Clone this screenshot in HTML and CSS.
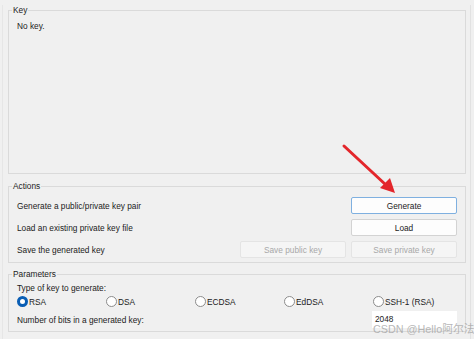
FILE: index.html
```html
<!DOCTYPE html>
<html lang="en">
<head>
    <meta charset="UTF-8">
    <meta name="viewport" content="width=device-width, initial-scale=1.0">
    <title>PuTTY Key Generator</title>
    <link rel="stylesheet" href="styles.css">
</head>
<body>
    <div class="window">
        <fieldset class="group key-group">
            <legend>Key</legend>
            <div class="key-text">No key.</div>
        </fieldset>

        <fieldset class="group actions">
            <legend>Actions</legend>
            <div class="action-grid">
                <span class="row-label">Generate a public/private key pair</span>
                <span></span>
                <button class="btn btn-default">Generate</button>

                <span class="row-label">Load an existing private key file</span>
                <span></span>
                <button class="btn">Load</button>

                <span class="row-label">Save the generated key</span>
                <button class="btn" disabled>Save public key</button>
                <button class="btn" disabled>Save private key</button>
            </div>
        </fieldset>

        <fieldset class="group params">
            <legend>Parameters</legend>
            <div class="param-title">Type of key to generate:</div>
            <div class="radio-row">
                <label class="radio"><span class="dot checked"></span>RSA</label>
                <label class="radio"><span class="dot"></span>DSA</label>
                <label class="radio"><span class="dot"></span>ECDSA</label>
                <label class="radio"><span class="dot"></span>EdDSA</label>
                <label class="radio"><span class="dot"></span>SSH-1 (RSA)</label>
            </div>
            <div class="bits-row">
                <span>Number of bits in a generated key:</span>
                <div class="bits-input">2048</div>
            </div>
        </fieldset>
    </div>

    <svg class="arrow" width="474" height="339" viewBox="0 0 474 339">
        <line x1="344" y1="146" x2="386" y2="185" stroke="#e3262b" stroke-width="3" stroke-linecap="round"/>
        <polygon points="395,193 380,188 390,178" fill="#e3262b"/>
    </svg>

    <div class="watermark">CSDN @Hello阿尔法</div>
</body>
</html>
```

FILE: styles.css
```css
body {
    margin: 0;
    width: 474px;
    height: 339px;
    overflow: hidden;
    background: #f0f0f0;
    font-family: "Liberation Sans", Arial, sans-serif;
    font-size: 8.3px;
    line-height: 10px;
    color: #1b1b1b;
}
.window {
    height: 339px;
    margin: 0 3px 0 2px;
    border-left: 1px solid #e6e6e6;
    border-right: 1px solid #e2e2e2;
    box-sizing: border-box;
}
.group {
    margin: 0 4px 0 5px;
    padding: 0 8px;
    border: 1px solid #dadada;
    min-width: 0;
}
.group legend {
    margin-left: -5px;
    padding: 0 1px;
    line-height: 10px;
}
.key-group {
    margin-top: 5px;
    padding-top: 6px;
    padding-bottom: 4px;
}
.key-text {
    height: 148px;
}
.actions {
    margin-top: 7px;
    padding-top: 6px;
    padding-bottom: 4px;
}
.action-grid {
    display: grid;
    grid-template-columns: 1fr 106px 106px;
    grid-auto-rows: 17px;
    column-gap: 5px;
    row-gap: 5px;
    align-items: center;
}
.btn {
    height: 17px;
    padding: 0;
    font-family: inherit;
    font-size: 8.3px;
    color: #1b1b1b;
    background: #fdfdfd;
    border: 1px solid #d3d3d3;
    border-radius: 2px;
}
.btn-default {
    border-color: #7fb0e0;
}
.btn:disabled {
    background: #f5f5f5;
    border-color: #e4e4e4;
    color: #a8a8a8;
}
.params {
    margin-top: 6px;
    padding-top: 4px;
    padding-bottom: 3px;
}
.radio-row {
    display: grid;
    grid-template-columns: repeat(5, 89px);
    margin-top: 3px;
    height: 10px;
}
.radio {
    display: flex;
    align-items: center;
    gap: 1px;
}
.dot {
    width: 9px;
    height: 9px;
    border: 1px solid #8c8c8c;
    border-radius: 50%;
    background: #fff;
}
.dot.checked {
    width: 5px;
    height: 5px;
    border: 3px solid #0a5eb4;
}
.bits-row {
    display: flex;
    justify-content: space-between;
    align-items: center;
    margin-top: 5px;
    height: 17px;
}
.bits-input {
    box-sizing: border-box;
    width: 85px;
    height: 17px;
    padding: 3px 0 0 3px;
    background: #fff;
    line-height: 10px;
}
.arrow {
    position: absolute;
    left: 0;
    top: 0;
}
.watermark {
    position: absolute;
    left: 373px;
    top: 325px;
    white-space: nowrap;
    font-family: "Liberation Sans", "Noto Sans CJK SC", sans-serif;
    font-size: 10.8px;
    line-height: 9px;
    color: rgba(160, 160, 160, 0.75);
}
```
